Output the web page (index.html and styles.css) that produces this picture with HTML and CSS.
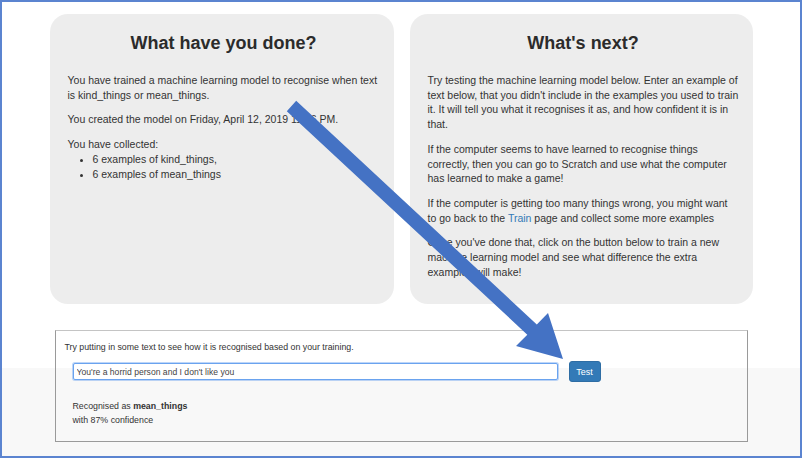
FILE: index.html
```html
<!DOCTYPE html>
<html lang="en">

<head>
    <meta charset="UTF-8">
    <meta name="viewport" content="width=device-width, initial-scale=1.0">
    <title>Learn &amp; Test</title>
    <link rel="stylesheet" href="styles.css">
</head>

<body>
    <div id="frame">
        <div id="panels">
            <div class="card">
                <h2 class="cardtitle">What have you done?</h2>
                <p>You have trained a machine learning model to recognise when text is kind_things or mean_things.</p>
                <p>You created the model on Friday, April 12, 2019 11:56 PM.</p>
                <p class="listhead">You have collected:</p>
                <ul class="counts">
                    <li>6 examples of kind_things,</li>
                    <li>6 examples of mean_things</li>
                </ul>
            </div>
            <div class="card">
                <h2 class="cardtitle">What's next?</h2>
                <p>Try testing the machine learning model below. Enter an example of text below, that you didn't include in the examples you used to train it. It will tell you what it recognises it as, and how confident it is in that.</p>
                <p>If the computer seems to have learned to recognise things correctly, then you can go to Scratch and use what the computer has learned to make a game!</p>
                <p>If the computer is getting too many things wrong, you might want to go back to the <a href="#">Train</a> page and collect some more examples</p>
                <p>Once you've done that, click on the button below to train a new machine learning model and see what difference the extra examples will make!</p>
            </div>
        </div>

        <div id="tester">
            <p class="hint">Try putting in some text to see how it is recognised based on your training.</p>
            <div class="testrow">
                <input id="testtext" type="text" value="You're a horrid person and I don't like you">
                <button class="testbutton">Test</button>
            </div>
            <div class="result">
                Recognised as <b>mean_things</b><br>
                with 87% confidence
            </div>
        </div>
    </div>

    <!-- annotation arrow drawn over the screenshot -->
    <svg id="arrow" width="805" height="461" viewBox="0 0 805 461">
        <polygon fill="#4472c4"
            points="296.2,100.8 536.8,324.4 548,313 563,359 516,346 527.3,334.7 286.8,111.2" />
    </svg>
</body>

</html>
```

FILE: styles.css
```css
html,
body {
    margin: 0;
    padding: 0;
    background-color: white;
}

body {
    position: relative;
    width: 805px;
    height: 461px;
    font-family: "Liberation Sans", Arial, sans-serif;
    color: #333;
}

#frame {
    box-sizing: border-box;
    width: 802px;
    height: 458px;
    border: 2px solid #5b84d0;
    background: linear-gradient(#fff 0, #fff 366px, #f8f8f8 366px);
    padding-top: 12px;
}

#panels {
    display: grid;
    grid-template-columns: 344px 343px;
    gap: 16px;
    width: 703px;
    margin: 0 auto;
}

.card {
    box-sizing: border-box;
    height: 290px;
    background-color: #ededed;
    border-radius: 18px;
    padding: 19px 14px 0 18px;
    font-size: 10.5px;
    line-height: 14.7px;
}

.cardtitle {
    margin: 0 0 20px 0;
    font-size: 18px;
    line-height: 20px;
    text-align: center;
    color: #2b2b2b;
}

.card p {
    margin: 0 0 10px 0;
}

.card p.listhead {
    margin: 0;
}

.counts {
    margin: 0;
    padding-left: 25px;
}

.card a {
    color: #337ab7;
    text-decoration: none;
}

#tester {
    box-sizing: border-box;
    width: 693px;
    height: 112px;
    margin: 26px auto 0 auto;
    border: 1px solid #9a9a9a;
    border-top-color: #c4c4c4;
    padding: 10px 9px 0 9px;
    font-size: 8.8px;
    color: #333;
}

.hint {
    margin: 0;
    line-height: 12px;
}

.testrow {
    display: flex;
    align-items: center;
    gap: 11px;
    margin: 8px 0 0 8px;
}

#testtext {
    box-sizing: border-box;
    width: 485px;
    height: 17px;
    margin: 0;
    padding: 0 3px;
    border: 1px solid #6aa3ef;
    border-radius: 2px;
    box-shadow: 0 0 0 1px rgba(110, 165, 240, 0.45);
    font-family: "Liberation Sans", Arial, sans-serif;
    font-size: 8.6px;
    color: #444;
    outline: none;
}

.testbutton {
    box-sizing: border-box;
    width: 32px;
    height: 21px;
    margin: 0;
    padding: 0;
    border: 1px solid #2e6da4;
    border-radius: 3px;
    background-color: #337ab7;
    color: white;
    font-family: "Liberation Sans", Arial, sans-serif;
    font-size: 9px;
}

.result {
    margin: 17px 0 0 8px;
    line-height: 14px;
}

#arrow {
    position: absolute;
    left: 0;
    top: 0;
    pointer-events: none;
}
```
